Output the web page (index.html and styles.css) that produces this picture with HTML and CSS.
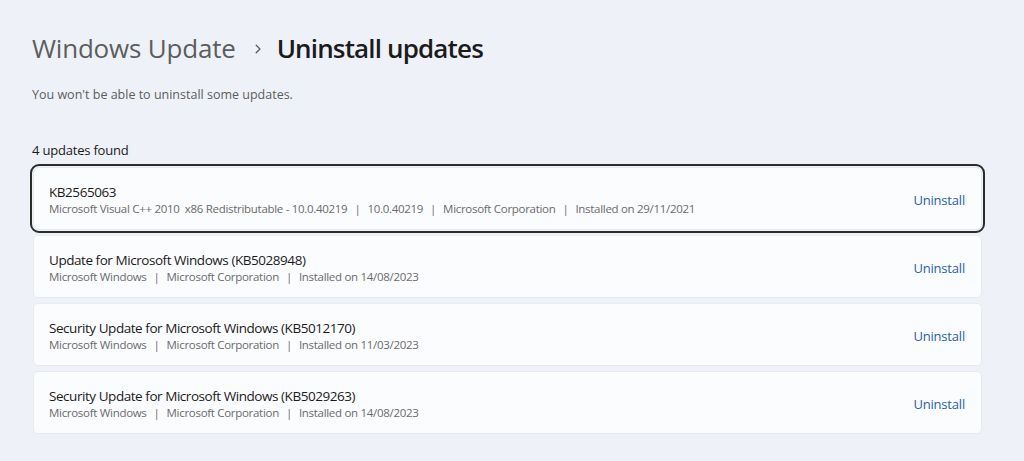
FILE: index.html
```html
<!DOCTYPE html>
<html lang="en">
<head>
    <meta charset="UTF-8">
    <meta name="viewport" content="width=device-width, initial-scale=1.0">
    <title>Uninstall updates</title>
    <link rel="stylesheet" href="styles.css">
</head>
<body>
    <div class="page">
        <h1 class="breadcrumb">
            <span class="crumb-parent">Windows Update</span>
            <svg class="crumb-chevron" viewBox="0 0 12 12" width="12" height="12">
                <path d="M4.2 2.2 L8 6 L4.2 9.8" fill="none" stroke="currentColor" stroke-width="1.3" stroke-linecap="round" stroke-linejoin="round"/>
            </svg>
            <span class="crumb-current">Uninstall updates</span>
        </h1>

        <p class="note">You won't be able to uninstall some updates.</p>

        <div class="count">4 updates found</div>

        <div class="update-list">
            <div class="update-card focused">
                <div class="update-info">
                    <div class="update-name">KB2565063</div>
                    <div class="update-meta">
                        <span>Microsoft Visual C++ 2010&nbsp; x86 Redistributable - 10.0.40219</span><span class="sep">|</span><span>10.0.40219</span><span class="sep">|</span><span>Microsoft Corporation</span><span class="sep">|</span><span>Installed on 29/11/2021</span>
                    </div>
                </div>
                <a class="uninstall" href="#">Uninstall</a>
            </div>

            <div class="update-card">
                <div class="update-info">
                    <div class="update-name">Update for Microsoft Windows (KB5028948)</div>
                    <div class="update-meta">
                        <span>Microsoft Windows</span><span class="sep">|</span><span>Microsoft Corporation</span><span class="sep">|</span><span>Installed on 14/08/2023</span>
                    </div>
                </div>
                <a class="uninstall" href="#">Uninstall</a>
            </div>

            <div class="update-card">
                <div class="update-info">
                    <div class="update-name">Security Update for Microsoft Windows (KB5012170)</div>
                    <div class="update-meta">
                        <span>Microsoft Windows</span><span class="sep">|</span><span>Microsoft Corporation</span><span class="sep">|</span><span>Installed on 11/03/2023</span>
                    </div>
                </div>
                <a class="uninstall" href="#">Uninstall</a>
            </div>

            <div class="update-card">
                <div class="update-info">
                    <div class="update-name">Security Update for Microsoft Windows (KB5029263)</div>
                    <div class="update-meta">
                        <span>Microsoft Windows</span><span class="sep">|</span><span>Microsoft Corporation</span><span class="sep">|</span><span>Installed on 14/08/2023</span>
                    </div>
                </div>
                <a class="uninstall" href="#">Uninstall</a>
            </div>
        </div>
    </div>
</body>
</html>
```

FILE: styles.css
```css
* {
    margin: 0;
    padding: 0;
    box-sizing: border-box;
}

body {
    font-family: 'Segoe UI', 'Open Sans', 'Noto Sans', sans-serif;
    background: #eef2f8;
    color: #1b1b1b;
    height: 100vh;
    overflow: hidden;
}

.page {
    padding: 28px 42px 0 32px;
}

.breadcrumb {
    display: flex;
    align-items: center;
    font-size: 26px;
    font-weight: 400;
    height: 40px;
    letter-spacing: -0.2px;
}

.crumb-parent {
    color: #5d5d5d;
}

.crumb-chevron {
    color: #5d5d5d;
    margin: 2px 13px 0 16px;
}

.crumb-current {
    font-weight: 600;
    color: #1b1b1b;
    letter-spacing: -0.85px;
}

.note {
    margin-top: 18px;
    font-size: 12.5px;
    color: #5d5d5d;
    letter-spacing: 0;
}

.count {
    margin-top: 38px;
    font-size: 13px;
    font-weight: 500;
    color: #1b1b1b;
    letter-spacing: -0.2px;
}

.update-list {
    margin-top: 8px;
    margin-left: 1px;
    display: flex;
    flex-direction: column;
    gap: 5px;
}

.update-card {
    height: 63px;
    display: flex;
    align-items: center;
    justify-content: space-between;
    padding: 3px 16px 0 15px;
    background: #fbfcfe;
    border: 1px solid #e7eaef;
    border-radius: 5px;
}

.update-card.focused {
    outline: 2px solid #2b2b2b;
    outline-offset: 1px;
    border-radius: 6px;
}

.update-name {
    font-size: 13.5px;
    color: #1b1b1b;
    letter-spacing: -0.45px;
    line-height: 17px;
}

.update-meta {
    font-size: 11.5px;
    color: #6b6b6b;
    letter-spacing: -0.3px;
    line-height: 16px;
}

.sep {
    margin: 0 7px;
    color: #6b6b6b;
}

.uninstall {
    font-size: 13px;
    color: #1f5fae;
    text-decoration: none;
    letter-spacing: -0.2px;
    margin-top: 0;
}
```
